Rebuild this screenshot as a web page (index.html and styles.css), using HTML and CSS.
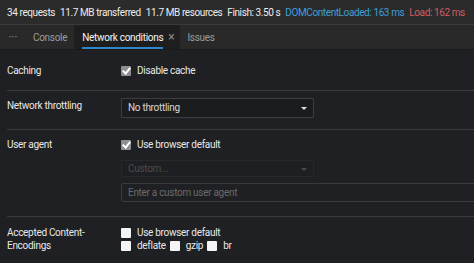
FILE: index.html
```html
<!DOCTYPE html>
<html>
<head>
<meta charset="utf-8">
<link rel="stylesheet" href="styles.css">
</head>
<body>
<div class="status">
  <span>34 requests</span>
  <span>11.7 MB transferred</span>
  <span>11.7 MB resources</span>
  <span>Finish: 3.50 s</span>
  <span class="dcl">DOMContentLoaded: 163 ms</span>
  <span class="load">Load: 162 ms</span>
</div>
<div class="tabs">
  <div class="more">&middot;&middot;&middot;</div>
  <div class="tab">Console</div>
  <div class="tab active"><span class="tab-label">Network conditions</span><span class="close">&times;</span></div>
  <div class="tab">Issues</div>
</div>
<div class="panel">
  <div class="row row-cache">
    <div class="label">Caching</div>
    <div class="controls">
      <label class="check"><span class="box checked"></span>Disable cache</label>
    </div>
  </div>
  <div class="row row-throttle">
    <div class="label">Network throttling</div>
    <div class="controls">
      <div class="select">No throttling<span class="arrow"></span></div>
    </div>
  </div>
  <div class="row row-ua">
    <div class="label">User agent</div>
    <div class="controls">
      <label class="check"><span class="box checked"></span>Use browser default</label>
      <div class="select disabled">Custom...<span class="arrow"></span></div>
      <div class="input">Enter a custom user agent</div>
    </div>
  </div>
  <div class="row row-enc">
    <div class="label">Accepted Content-<br>Encodings</div>
    <div class="controls">
      <label class="check"><span class="box"></span>Use browser default</label>
      <div class="inline">
        <label class="check"><span class="box"></span>deflate</label>
        <label class="check"><span class="box"></span>gzip</label>
        <label class="check"><span class="box"></span>br</label>
      </div>
    </div>
  </div>
</div>
</body>
</html>
```
FILE: styles.css
```css
html, body {
  margin: 0;
  padding: 0;
  background: #1f2023;
  font-family: Roboto, Lato, sans-serif;
  font-size: 10px;
  letter-spacing: -0.3px;
  color: #e4e4e4;
  overflow: hidden;
}
.status {
  height: 25px;
  box-sizing: border-box;
  background: #2b2b2b;
  border-bottom: 1px solid #3b3b3b;
  display: flex;
  align-items: center;
  gap: 5px;
  padding-left: 7px;
  white-space: nowrap;
  color: #ececec;
  letter-spacing: -0.4px;
}
.dcl { color: #3f9fd6; }
.load { color: #d45b62; }
.tabs {
  height: 24px;
  background: #292929;
  display: flex;
  align-items: stretch;
  border-bottom: 1px solid #1a1a1a;
}
.more {
  width: 26px;
  display: flex;
  align-items: center;
  justify-content: center;
  color: #9a9a9a;
  font-size: 11px;
  letter-spacing: 0;
}
.tab {
  display: flex;
  align-items: center;
  padding: 0 7px;
  color: #9c9c9c;
}
.tab.active {
  background: #1e1e1e;
  color: #f4f4f4;
  padding: 0 6px 0 8px;
  gap: 5px;
}
.tab-label {
  align-self: stretch;
  display: flex;
  align-items: center;
  border-bottom: 2px solid #2f86c9;
  box-sizing: border-box;
  padding-top: 2px;
}
.close {
  color: #8a8a8a;
  font-size: 12px;
}
.panel {
  display: flex;
  flex-direction: column;
}
.row {
  display: flex;
  margin-left: 7px;
  border-bottom: 1px solid #3a3a3c;
  line-height: 16px;
}
.row:last-child { border-bottom: none; }
.label {
  width: 114px;
  flex: none;
  color: #e8e8e8;
}
.controls {
  flex: 1;
  display: flex;
  flex-direction: column;
  min-width: 0;
  overflow: hidden;
}
.check {
  display: flex;
  align-items: center;
  gap: 6px;
  color: #e8e8e8;
  white-space: nowrap;
}
.box {
  width: 10px;
  height: 10px;
  background: #f4f4f4;
  border-radius: 1px;
  flex: none;
  position: relative;
}
.box.checked {
  background: #8f8f92;
}
.box.checked::after {
  content: "";
  position: absolute;
  left: 3px;
  top: 0px;
  width: 3px;
  height: 6px;
  border: solid #ffffff;
  border-width: 0 2px 2px 0;
  transform: rotate(40deg);
}
.row-cache { padding: 13px 0 11px; }
.row-throttle { padding: 7px 0 11px; }
.row-ua { padding: 7px 0 14px; }
.row-enc { padding: 9px 0 10px; line-height: 13px; }
.select {
  width: 193px;
  height: 20px;
  box-sizing: border-box;
  border: 1px solid #3d3d40;
  background: #1b1c1e;
  padding-left: 6px;
  display: flex;
  align-items: center;
  color: #d8d8d8;
  position: relative;
}
.select .arrow {
  position: absolute;
  right: 6px;
  top: 8px;
  width: 0;
  height: 0;
  border-left: 3px solid transparent;
  border-right: 3px solid transparent;
  border-top: 3px solid #e0e0e0;
}
.select.disabled {
  margin-top: 7px;
  height: 17px;
  border-color: #27282b;
  background: #1e1f22;
  color: #4a4b4e;
}
.select.disabled .arrow {
  border-top-color: #4a4a4d;
  top: 7px;
}
.input {
  margin-top: 6px;
  width: calc(100% + 4px);
  flex: none;
  height: 19px;
  box-sizing: border-box;
  border: 1px solid #3a3b3e;
  border-radius: 2px;
  padding-left: 6px;
  display: flex;
  align-items: center;
  color: #6a6b6e;
}
.inline {
  display: flex;
  gap: 4px;
}
```
